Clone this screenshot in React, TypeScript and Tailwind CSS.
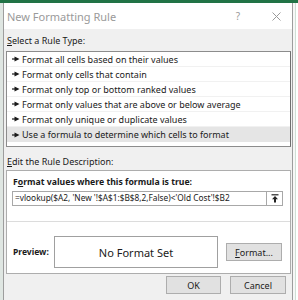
import React from "react";

const Arrow = () => (
  <svg width="8" height="6" viewBox="0 0 8 6" className="shrink-0">
    <path d="M0 3 H3" stroke="#1a1a1a" strokeWidth="1.2" />
    <path d="M2.5 0.5 L7.5 3 L2.5 5.5 Z" fill="#1a1a1a" />
  </svg>
);

const items = [
  "Format all cells based on their values",
  "Format only cells that contain",
  "Format only top or bottom ranked values",
  "Format only values that are above or below average",
  "Format only unique or duplicate values",
  "Use a formula to determine which cells to format",
];

export default function App() {
  return (
    <div
      className="w-[298px] h-[300px] bg-white overflow-hidden flex flex-col text-[#1a1a1a]"
      style={{ fontFamily: '"Noto Sans", "Open Sans", sans-serif' }}
    >
      <div className="h-[3px] bg-[#217346] shrink-0" />
      <div className="flex flex-1">
        <div className="w-[3px] bg-[#dfe6e2] shrink-0" />
        <div className="w-[290px] shrink-0 border-l border-r border-[#9d9d9d] bg-[#f0f0f0] flex flex-col">
          {/* title bar */}
          <div className="h-[26px] bg-white flex items-center pl-[3px] shrink-0">
            <span className="text-[11px] text-[#9a9a9a] leading-none">New Formatting Rule</span>
            <span className="ml-auto text-[10px] text-[#9a9a9a] leading-none mr-[32px]">?</span>
            <svg width="9" height="9" viewBox="0 0 9 9" className="mr-[11px]">
              <path d="M0.5 0.5 L8.5 8.5 M8.5 0.5 L0.5 8.5" stroke="#9a9a9a" strokeWidth="1" />
            </svg>
          </div>
          {/* body */}
          <div className="flex flex-col pl-[2px]">
            <div className="mt-[6px] h-[12px] text-[9px] leading-[12px] pl-[1px]">
              <span className="underline">S</span>elect a Rule Type:
            </div>
            <div className="mt-[4px] w-[285px] h-[96px] bg-white border border-[#8c8c8c] border-r-[#6f6f6f] flex flex-col">
              {items.map((t, i) => (
                <div
                  key={i}
                  className={`h-[15px] flex items-center gap-[2px] pl-[5px] text-[9px] border-b border-[#f1f1f1] ${
                    i === 5 ? "bg-[#e5e5e5] border-b-0" : ""
                  }`}
                >
                  <Arrow />
                  <span className="leading-none">{t}</span>
                </div>
              ))}
            </div>
            <div className="mt-[9px] h-[12px] text-[9px] leading-[12px] pl-[1px]">
              <span className="underline">E</span>dit the Rule Description:
            </div>
            <div className="mt-[2px] w-[285px] h-[104px] bg-white border border-[#adadad] flex flex-col">
              <div className="pl-[6px] pt-[5px] h-[17px] text-[8.7px] font-bold leading-[12px]">
                F<span className="underline">o</span>rmat values where this formula is true:
              </div>
              <div className="ml-[5px] mt-[3px] w-[271px] h-[15px] border border-[#a8a8a8] flex items-center">
                <span className="pl-[2px] text-[8.3px] leading-none whitespace-nowrap flex-1">
                  =vlookup($A2, 'New '!$A$1:$B$8,2,False)&lt;'Old Cost'!$B2
                </span>
                <div className="w-[16px] h-full border-l border-[#a8a8a8] flex items-center justify-center">
                  <svg width="8" height="9" viewBox="0 0 8 9">
                    <path d="M0.5 0.8 H7.5" stroke="#222" strokeWidth="1.2" />
                    <path d="M4 2 L7 5.2 H5 V8.5 H3 V5.2 H1 Z" fill="#222" />
                  </svg>
                </div>
              </div>
              <div className="mt-[15px] h-px bg-[#dcdcdc]" />
              <div className="mt-[14px] flex items-center">
                <span className="pl-[6px] w-[47px] text-[8.5px] font-bold leading-none">Preview:</span>
                <div className="w-[164px] h-[32px] border border-[#a0a0a0] flex items-center justify-center text-[11px] leading-none">
                  No Format Set
                </div>
                <div className="ml-[8px] w-[56px] h-[18px] bg-[#e1e1e1] border border-[#adadad] flex items-center justify-center text-[9px] leading-none">
                  <span className="underline">F</span>ormat...
                </div>
              </div>
            </div>
            <div className="mt-[2px] flex">
              <div className="ml-[160px] w-[55px] h-[18px] bg-[#e1e1e1] border border-[#adadad] flex items-center justify-center text-[9px] leading-none">
                OK
              </div>
              <div className="ml-[9px] w-[56px] h-[18px] bg-[#e1e1e1] border border-[#adadad] flex items-center justify-center text-[9px] leading-none">
                Cancel
              </div>
            </div>
          </div>
        </div>
        <div className="flex-1 bg-white flex">
          <div className="w-[2px] bg-[#f7f7f7]" />
          <div className="w-px bg-[#cfe0d6]" />
        </div>
      </div>
    </div>
  );
}
